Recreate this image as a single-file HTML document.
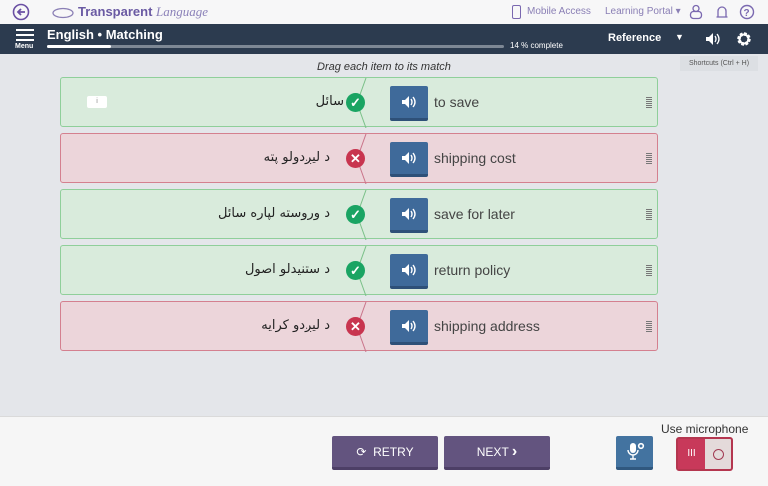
<!DOCTYPE html>
<html><head><meta charset="utf-8"><style>
*{box-sizing:border-box;margin:0;padding:0}
body{width:768px;height:486px;overflow:hidden;background:#e4e6ea;font-family:"Liberation Sans",sans-serif;position:relative}
.top{position:absolute;left:0;top:0;width:768px;height:24px;background:#f7f7f8}
.bar{position:absolute;left:0;top:24px;width:768px;height:30px;background:#2c3b4f;color:#fff}
.abs{position:absolute}
.row{position:absolute;left:60px;width:598px;height:50px;border:1px solid #8fcf9a;background:#d9ebdc;border-radius:3px}
.row.bad{border-color:#d4808f;background:#ecd5da}
.row svg.ln{position:absolute;left:0;top:0}
.ic{position:absolute;left:285px;top:15px;width:19px;height:19px;border-radius:50%;color:#fff;font-size:13px;font-weight:bold;text-align:center;line-height:19px}
.ok{background:#1aa463}.x{background:#c8354f}
.spk{position:absolute;left:329px;top:8px;width:38px;height:35px;background:#3f6a9a;border-bottom:3px solid #2e5078;border-radius:2px}
.spk svg{position:absolute;left:11px;top:9px}
.en{position:absolute;left:373px;top:16px;font-size:14px;color:#444}
.ar{position:absolute;right:327px;top:16px;font-size:13px;color:#222;font-family:"DejaVu Sans",sans-serif;direction:rtl}
.grip{position:absolute;left:585px;top:19px;width:6px;height:12px;background:repeating-linear-gradient(#777 0 1px,transparent 1px 2px)}
.btn{position:absolute;top:436px;height:34px;background:#63547f;border-bottom:3px solid #4d3f66;color:#fff;font-size:12px;text-align:center;line-height:32px;border-radius:2px}
</style></head><body>
<div class="top"></div>
<svg class="abs" style="left:12px;top:3px" width="18" height="18"><circle cx="9" cy="9" r="7.5" fill="none" stroke="#6a4fa3" stroke-width="1.6"/><path d="M13 9H6M9 6L6 9L9 12" stroke="#6a4fa3" stroke-width="1.8" fill="none"/></svg>
<svg class="abs" style="left:52px;top:7px" width="24" height="12"><ellipse cx="11" cy="6" rx="10" ry="4.5" fill="none" stroke="#8a7fb5" stroke-width="1.3"/></svg>
<div class="abs" style="left:78px;top:4px;font-size:13px;font-weight:bold;color:#6a5aa3">Transparent <span style="font-family:'Liberation Serif',serif;font-style:italic;font-weight:normal;color:#8a80b8">Language</span></div>
<div class="abs" style="left:512px;top:5px;width:9px;height:14px;border:1.5px solid #7a68b0;border-radius:2px"></div>
<div class="abs" style="left:527px;top:6px;font-size:10px;color:#8a7fb5">Mobile Access</div>
<div class="abs" style="left:605px;top:6px;font-size:10px;color:#8a7fb5">Learning Portal ▾</div>
<svg class="abs" style="left:688px;top:4px" width="70" height="16"><circle cx="8" cy="4.5" r="3" fill="none" stroke="#7a68b0" stroke-width="1.3"/><rect x="2.5" y="7.5" width="11" height="7" rx="3" fill="none" stroke="#7a68b0" stroke-width="1.3"/><path d="M30 13V7a4 4 0 0 1 8 0v6H28.5h11" fill="none" stroke="#7a68b0" stroke-width="1.3"/><circle cx="59" cy="8" r="6.5" fill="none" stroke="#7a68b0" stroke-width="1.4"/><text x="55.5" y="12" font-size="10" fill="#7a68b0" font-weight="bold" font-family="Liberation Sans">?</text></svg>
<div class="bar">
<div class="abs" style="left:16px;top:5px;width:18px;height:2px;background:#fff;box-shadow:0 5px 0 #fff,0 10px 0 #fff"></div>
<div class="abs" style="left:15px;top:19px;font-size:7px;font-weight:bold">Menu</div>
<div class="abs" style="left:47px;top:3px;font-size:13px;font-weight:bold">English • Matching</div>
<div class="abs" style="left:47px;top:21px;width:457px;height:3px;background:#7d8794;border-radius:2px"></div>
<div class="abs" style="left:47px;top:21px;width:64px;height:3px;background:#fff;border-radius:2px"></div>
<div class="abs" style="left:510px;top:17px;font-size:8px">14 % complete</div>
<div class="abs" style="left:608px;top:8px;font-size:11px;font-weight:bold">Reference</div>
<div class="abs" style="left:675px;top:8px;font-size:9px">▼</div>
<svg class="abs" style="left:705px;top:8px" width="16" height="14"><path d="M1 5h3l4-4v12L4 9H1z" fill="#fff"/><path d="M10 4q2 3 0 6M12 2q4 5 0 10" stroke="#fff" stroke-width="1.3" fill="none"/></svg>
<svg class="abs" style="left:736px;top:7px" width="16" height="16"><circle cx="8" cy="8" r="5" fill="none" stroke="#fff" stroke-width="3.5" stroke-dasharray="2.5 1.4"/><circle cx="8" cy="8" r="4.5" fill="none" stroke="#fff" stroke-width="2"/></svg>
</div>
<div class="abs" style="left:680px;top:56px;width:78px;height:15px;background:#dcdfe3;font-size:7px;color:#555;text-align:center;line-height:15px">Shortcuts (Ctrl + H)</div>
<div class="abs" style="left:317px;top:61px;font-size:11px;font-style:italic;color:#333">Drag each item to its match</div>

<div class="row" style="top:77px"><svg class="ln" width="598" height="50"><path d="M305 0L296 25L305 50" stroke="#7ac088" fill="none"/></svg><div class="abs" style="left:26px;top:18px;width:20px;height:12px;background:#fff;border-radius:2px;font-size:7px;color:#888;text-align:center;line-height:12px">i</div><div class="ar" style="right:313px">سائل</div><div class="ic ok">✓</div><div class="spk"><svg width="16" height="14"><path d="M1 5h3l4-4v12L4 9H1z" fill="#fff"/><path d="M10 4q2 3 0 6M12 2q4 5 0 10" stroke="#fff" stroke-width="1.4" fill="none"/></svg></div><div class="en">to save</div><div class="grip"></div></div>
<div class="row bad" style="top:133px"><svg class="ln" width="598" height="50"><path d="M305 0L296 25L305 50" stroke="#c9748a" fill="none"/></svg><div class="ar">د لیږدولو پته</div><div class="ic x">✕</div><div class="spk"><svg width="16" height="14"><path d="M1 5h3l4-4v12L4 9H1z" fill="#fff"/><path d="M10 4q2 3 0 6M12 2q4 5 0 10" stroke="#fff" stroke-width="1.4" fill="none"/></svg></div><div class="en">shipping cost</div><div class="grip"></div></div>
<div class="row" style="top:189px"><svg class="ln" width="598" height="50"><path d="M305 0L296 25L305 50" stroke="#7ac088" fill="none"/></svg><div class="ar">د وروسته لپاره سائل</div><div class="ic ok">✓</div><div class="spk"><svg width="16" height="14"><path d="M1 5h3l4-4v12L4 9H1z" fill="#fff"/><path d="M10 4q2 3 0 6M12 2q4 5 0 10" stroke="#fff" stroke-width="1.4" fill="none"/></svg></div><div class="en">save for later</div><div class="grip"></div></div>
<div class="row" style="top:245px"><svg class="ln" width="598" height="50"><path d="M305 0L296 25L305 50" stroke="#7ac088" fill="none"/></svg><div class="ar">د ستنیدلو اصول</div><div class="ic ok">✓</div><div class="spk"><svg width="16" height="14"><path d="M1 5h3l4-4v12L4 9H1z" fill="#fff"/><path d="M10 4q2 3 0 6M12 2q4 5 0 10" stroke="#fff" stroke-width="1.4" fill="none"/></svg></div><div class="en">return policy</div><div class="grip"></div></div>
<div class="row bad" style="top:301px"><svg class="ln" width="598" height="50"><path d="M305 0L296 25L305 50" stroke="#c9748a" fill="none"/></svg><div class="ar">د لیږدو کرایه</div><div class="ic x">✕</div><div class="spk"><svg width="16" height="14"><path d="M1 5h3l4-4v12L4 9H1z" fill="#fff"/><path d="M10 4q2 3 0 6M12 2q4 5 0 10" stroke="#fff" stroke-width="1.4" fill="none"/></svg></div><div class="en">shipping address</div><div class="grip"></div></div>

<div class="abs" style="left:0;top:416px;width:768px;height:70px;background:#f6f6f6;border-top:1px solid #dadada"></div>
<div class="btn" style="left:332px;width:106px">⟳ &nbsp;RETRY</div>
<div class="btn" style="left:444px;width:106px">NEXT <b style="font-size:16px">›</b></div>
<div class="abs" style="left:616px;top:436px;width:37px;height:34px;background:#4373a0;border-bottom:3px solid #30587f;border-radius:2px"><svg style="position:absolute;left:11px;top:6px" width="18" height="20"><rect x="3" y="1" width="6" height="10" rx="3" fill="#fff"/><path d="M1 8a5 5 0 0 0 10 0M6 13v4M3 17h6" stroke="#fff" stroke-width="1.4" fill="none"/><circle cx="14" cy="4" r="2.3" fill="none" stroke="#fff" stroke-width="1.6"/></svg></div>
<div class="abs" style="left:661px;top:422px;font-size:12px;color:#333">Use microphone</div>
<div class="abs" style="left:676px;top:437px;width:57px;height:34px;border:2px solid #b4364f;border-radius:3px;background:#e4dada"><div style="position:absolute;left:0;top:0;width:27px;height:30px;background:#c8395a;color:#fff;font-size:10px;text-align:center;line-height:30px">III</div><div style="position:absolute;left:35px;top:10px;width:11px;height:11px;border:1.5px solid #a23a52;border-radius:50%"></div></div>
</body></html>
